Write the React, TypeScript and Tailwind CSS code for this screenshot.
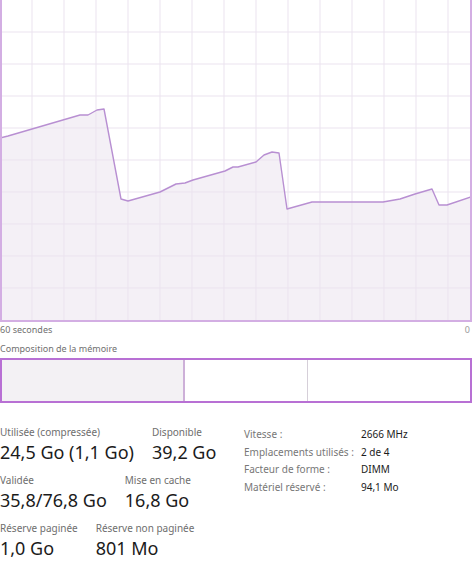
const points: [number, number][] = [
  [0, 138], [8, 136], [80, 115], [88, 115], [97, 110], [104, 109],
  [121, 199], [128, 201], [160, 192], [176, 184], [185, 183], [193, 180],
  [225, 171], [233, 167], [238, 167], [256, 162], [264, 155], [272, 152],
  [279, 153], [287, 209], [312, 202], [383, 202], [400, 199], [415, 194],
  [432, 189], [439, 205], [447, 205], [471, 197],
];

const line = points.map(([x, y]) => `${x},${y}`).join(' ');
const area = `0,322 ${line} 471,322`;

const Stat = ({ label, value }: { label: string; value: string }) => (
  <div className="flex flex-col">
    <span className="text-[10px] leading-[14px] text-[#6e6e6e]">{label}</span>
    <span className="text-[18px] leading-[26px] text-[#1b1b1b]">{value}</span>
  </div>
);

const Info = ({ label, value }: { label: string; value: string }) => (
  <div className="flex h-[17.5px] items-center text-[10px]">
    <span className="w-[117px] shrink-0 whitespace-nowrap text-[#777]">{label}</span>
    <span className="whitespace-nowrap text-[#1b1b1b]">{value}</span>
  </div>
);

export default function App() {
  return (
    <div className="h-[579px] w-[474px] overflow-hidden bg-white" style={{ fontFamily: '"Noto Sans", "Open Sans", sans-serif' }}>
      {/* Graph */}
      <div className="h-[322px] w-[472px] border-x-2 border-b-2 border-[#d3aee3]">
        <svg width="468" height="320" viewBox="2 0 468 320" className="block">
          <polygon points={area} fill="#f4f0f6" />
          {Array.from({ length: 14 }, (_, i) => (
            <line key={`v${i}`} x1={32 * (i + 1)} y1={0} x2={32 * (i + 1)} y2={322} stroke="#ebe3ef" strokeWidth={1} />
          ))}
          {Array.from({ length: 9 }, (_, i) => (
            <line key={`h${i}`} x1={0} y1={32 * (i + 1)} x2={472} y2={32 * (i + 1)} stroke="#ebe3ef" strokeWidth={1} />
          ))}
          <polyline points={line} fill="none" stroke="#b88fd2" strokeWidth={1.4} strokeLinejoin="round" />
        </svg>
      </div>

      <div className="mt-[1px] flex w-[472px] justify-between text-[9px] leading-[13px] text-[#707070]">
        <span>60 secondes</span>
        <span className="pr-[2px] text-[#9a9a9a]">0</span>
      </div>
      <div className="mt-[6px] text-[9px] leading-[13px] text-[#707070]">Composition de la mémoire</div>

      {/* Composition bar */}
      <div className="mt-[3px] flex h-[45px] w-[472px] border-2 border-[#b870d4]">
        <div className="w-[181px] bg-[#f3f1f4]" />
        <div className="w-[2px] bg-[#cdb0d8]" />
        <div className="w-[122px] bg-white" />
        <div className="w-[1px] bg-[#d6cfd9]" />
        <div className="flex-1 bg-white" />
      </div>

      {/* Stats */}
      <div className="mt-[22px] flex gap-[18px]">
        <div className="flex w-[226px] flex-col gap-[8px]">
          <div className="flex gap-[18px]">
            <Stat label="Utilisée (compressée)" value="24,5 Go (1,1 Go)" />
            <Stat label="Disponible" value="39,2 Go" />
          </div>
          <div className="flex gap-[18px]">
            <Stat label="Validée" value="35,8/76,8 Go" />
            <Stat label="Mise en cache" value="16,8 Go" />
          </div>
          <div className="flex gap-[18px]">
            <Stat label="Réserve paginée" value="1,0 Go" />
            <Stat label="Réserve non paginée" value="801 Mo" />
          </div>
        </div>
        <div className="mt-[1px] flex flex-col">
          <Info label="Vitesse :" value="2666 MHz" />
          <Info label="Emplacements utilisés :" value="2 de 4" />
          <Info label="Facteur de forme :" value="DIMM" />
          <Info label="Matériel réservé :" value="94,1 Mo" />
        </div>
      </div>
    </div>
  );
}
